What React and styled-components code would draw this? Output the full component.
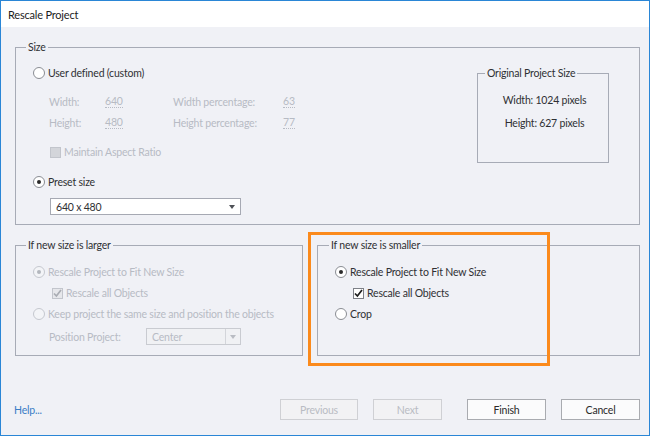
import React from "react";
import styled, { createGlobalStyle } from "styled-components";

const GlobalStyle = createGlobalStyle`
  html, body {
    margin: 0;
    padding: 0;
    background: #ffffff;
  }
  body {
    font-family: "Segoe UI", Lato, "Liberation Sans", sans-serif;
    font-size: 10.5px;
    letter-spacing: -0.2px;
    color: #2f3033;
  }
  * {
    box-sizing: border-box;
  }
`;

const Window = styled.div`
  width: 650px;
  height: 436px;
  border: 1px solid #2a86d6;
  background: #f0f1f6;
  display: flex;
  flex-direction: column;
`;

const TitleBar = styled.div`
  height: 26px;
  background: #ffffff;
  display: flex;
  align-items: center;
  padding-left: 7px;
  font-size: 11px;
  color: #1c1c1c;
`;

const Body = styled.div`
  flex: 1;
  display: flex;
  flex-direction: column;
  padding: 20px 9px 15px 14px;
`;

const Group = styled.div`
  position: relative;
  border: 1px solid #a7abb6;
  height: ${({ $height }) => $height}px;
  padding: ${({ $pad }) => $pad || "15px 0 0 17px"};
`;

const Legend = styled.span`
  position: absolute;
  top: -8px;
  left: ${({ $left }) => $left || 10}px;
  padding: 0 2px;
  background: #f0f1f6;
  line-height: 15px;
  color: #2f3033;
`;

const Highlight = styled.div`
  position: absolute;
  left: -10px;
  top: -14px;
  width: 242px;
  height: 134px;
  border: 3px solid #fb8a1c;
  pointer-events: none;
`;

const SizeLayout = styled.div`
  display: grid;
  grid-template-columns: 1fr auto;
`;

const Column = styled.div`
  display: flex;
  flex-direction: column;
`;

const Row = styled.div`
  display: flex;
  align-items: center;
  height: ${({ $h }) => $h || 20}px;
  margin-top: ${({ $mt }) => $mt || 0}px;
  margin-left: ${({ $indent }) => $indent || 0}px;
  gap: 3px;
  color: ${({ $disabled }) => ($disabled ? "#b7bbc4" : "#2f3033")};
`;

const FieldGrid = styled.div`
  display: grid;
  grid-template-columns: 56px 68px 110px auto;
  grid-auto-rows: 21px;
  align-items: center;
  margin-left: 16px;
  margin-top: ${({ $mt }) => $mt}px;
  color: #b7bbc4;
`;

const Value = styled.span`
  justify-self: start;
  border-bottom: 1px dotted #b7bbc4;
  line-height: 12px;
`;

const RadioCircle = styled.span`
  width: 12px;
  height: 12px;
  border-radius: 50%;
  border: 1px solid ${({ $disabled }) => ($disabled ? "#c5c8cf" : "#8a8d93")};
  background: ${({ $disabled }) => ($disabled ? "#f3f4f7" : "#ffffff")};
  display: inline-flex;
  align-items: center;
  justify-content: center;
  flex-shrink: 0;
  &::after {
    content: "";
    width: 4px;
    height: 4px;
    border-radius: 50%;
    background: ${({ $disabled }) => ($disabled ? "#b3b6bd" : "#2a2a2a")};
    display: ${({ $checked }) => ($checked ? "block" : "none")};
  }
`;

const CheckBox = styled.span`
  width: 11px;
  height: 11px;
  border: 1px solid ${({ $disabled }) => ($disabled ? "#c2c5cc" : "#7d8087")};
  background: ${({ $disabled, $checked }) =>
    $disabled ? ($checked ? "#e6e7eb" : "#d3d5da") : "#ffffff"};
  display: inline-flex;
  align-items: center;
  justify-content: center;
  flex-shrink: 0;
`;

const Radio = ({ checked, disabled, children, ...rest }) => (
  <Row $disabled={disabled} {...rest}>
    <RadioCircle $checked={checked} $disabled={disabled} />
    <span>{children}</span>
  </Row>
);

const Check = ({ checked, disabled, children, ...rest }) => (
  <Row $disabled={disabled} {...rest}>
    <CheckBox $checked={checked} $disabled={disabled}>
      {checked && (
        <svg width="9" height="9" viewBox="0 0 9 9">
          <path
            d="M1 4.5 L3.4 7 L8 1"
            fill="none"
            stroke={disabled ? "#a9acb3" : "#1e1e1e"}
            strokeWidth="1.7"
          />
        </svg>
      )}
    </CheckBox>
    <span>{children}</span>
  </Row>
);

const Select = styled.div`
  display: flex;
  align-items: center;
  width: ${({ $w }) => $w}px;
  height: ${({ $h }) => $h}px;
  margin-left: ${({ $ml }) => $ml || 0}px;
  margin-top: ${({ $mt }) => $mt || 0}px;
  border: 1px solid ${({ $disabled }) => ($disabled ? "#c9cbd1" : "#a6a9b3")};
  background: ${({ $disabled }) => ($disabled ? "#f0f1f4" : "#ffffff")};
  color: ${({ $disabled }) => ($disabled ? "#b7bbc4" : "#2f3033")};
  padding-left: 5px;
`;

const SelectText = styled.span`
  flex: 1;
`;

const SelectArrow = styled.span`
  width: ${({ $divider }) => ($divider ? 15 : 17)}px;
  height: 100%;
  display: flex;
  align-items: center;
  justify-content: center;
  border-left: ${({ $divider }) => ($divider ? "1px solid #d3d5da" : "none")};
  &::after {
    content: "";
    border-left: 3.5px solid transparent;
    border-right: 3.5px solid transparent;
    border-top: 4px solid ${({ $disabled }) => ($disabled ? "#b9bcc3" : "#4e5157")};
  }
`;

const OriginalBox = styled.div`
  position: relative;
  width: 132px;
  height: 90px;
  margin: 10px 30px 0 0;
  border: 1px solid #a7abb6;
  padding-top: 15px;
  display: flex;
  flex-direction: column;
  align-items: center;
  line-height: 23px;
  padding-left: 3px;
`;

const LowerRow = styled.div`
  display: grid;
  grid-template-columns: 288px 323px;
  column-gap: 14px;
  margin-top: 20px;
`;

const Footer = styled.div`
  margin-top: auto;
  display: flex;
  align-items: center;
  height: 21px;
`;

const HelpLink = styled.span`
  color: #3a7ec6;
  flex: 1;
  margin-left: -1px;
`;

const Button = styled.div`
  width: ${({ $w }) => $w}px;
  height: 21px;
  margin-left: ${({ $ml }) => $ml || 0}px;
  display: flex;
  align-items: center;
  justify-content: center;
  border: 1px solid ${({ $disabled }) => ($disabled ? "#cfd0d4" : "#a9abb0")};
  background: ${({ $disabled }) => ($disabled ? "#f2f2f4" : "#fbfbfc")};
  color: ${({ $disabled }) => ($disabled ? "#b9bcc3" : "#2a2a2a")};
`;

const App = () => {
  return (
    <>
      <GlobalStyle />
      <Window>
        <TitleBar>Rescale Project</TitleBar>
        <Body>
          <Group $height={178}>
            <Legend>Size</Legend>
            <SizeLayout>
              <Column>
                <Radio>User defined (custom)</Radio>
                <FieldGrid $mt={8}>
                  <span>Width:</span>
                  <Value>640</Value>
                  <span>Width percentage:</span>
                  <Value>63</Value>
                  <span>Height:</span>
                  <Value>480</Value>
                  <span>Height percentage:</span>
                  <Value>77</Value>
                </FieldGrid>
                <Check checked={false} disabled $indent={17} $mt={9}>
                  Maintain Aspect Ratio
                </Check>
                <Radio checked $mt={10}>
                  Preset size
                </Radio>
                <Select $w={191} $h={17} $ml={17} $mt={6}>
                  <SelectText>640 x 480</SelectText>
                  <SelectArrow />
                </Select>
              </Column>
              <OriginalBox>
                <Legend $left={7}>Original Project Size</Legend>
                <span>Width: 1024 pixels</span>
                <span>Height: 627 pixels</span>
              </OriginalBox>
            </SizeLayout>
          </Group>
          <LowerRow>
            <Group $height={111} $pad="16px 0 0 17px">
              <Legend>If new size is larger</Legend>
              <Radio checked disabled>
                Rescale Project to Fit New Size
              </Radio>
              <Check checked disabled $indent={19} $mt={1}>
                Rescale all Objects
              </Check>
              <Radio disabled $mt={1}>
                Keep project the same size and position the objects
              </Radio>
              <Row $disabled $indent={16} $mt={4} $h={17}>
                <span style={{ width: 94 }}>Position Project:</span>
                <Select $w={95} $h={17} $disabled>
                  <SelectText>Center</SelectText>
                  <SelectArrow $divider $disabled />
                </Select>
              </Row>
            </Group>
            <Group $height={111} $pad="16px 0 0 17px">
              <Legend $left={11}>If new size is smaller</Legend>
              <Radio checked>Rescale Project to Fit New Size</Radio>
              <Check checked $indent={18} $mt={1}>
                Rescale all Objects
              </Check>
              <Radio $mt={1}>Crop</Radio>
              <Highlight />
            </Group>
          </LowerRow>
          <Footer>
            <HelpLink>Help...</HelpLink>
            <Button $w={78} $disabled>
              Previous
            </Button>
            <Button $w={69} $ml={15} $disabled>
              Next
            </Button>
            <Button $w={79} $ml={25}>
              Finish
            </Button>
            <Button $w={79} $ml={15}>
              Cancel
            </Button>
          </Footer>
        </Body>
      </Window>
    </>
  );
};

export default App;
